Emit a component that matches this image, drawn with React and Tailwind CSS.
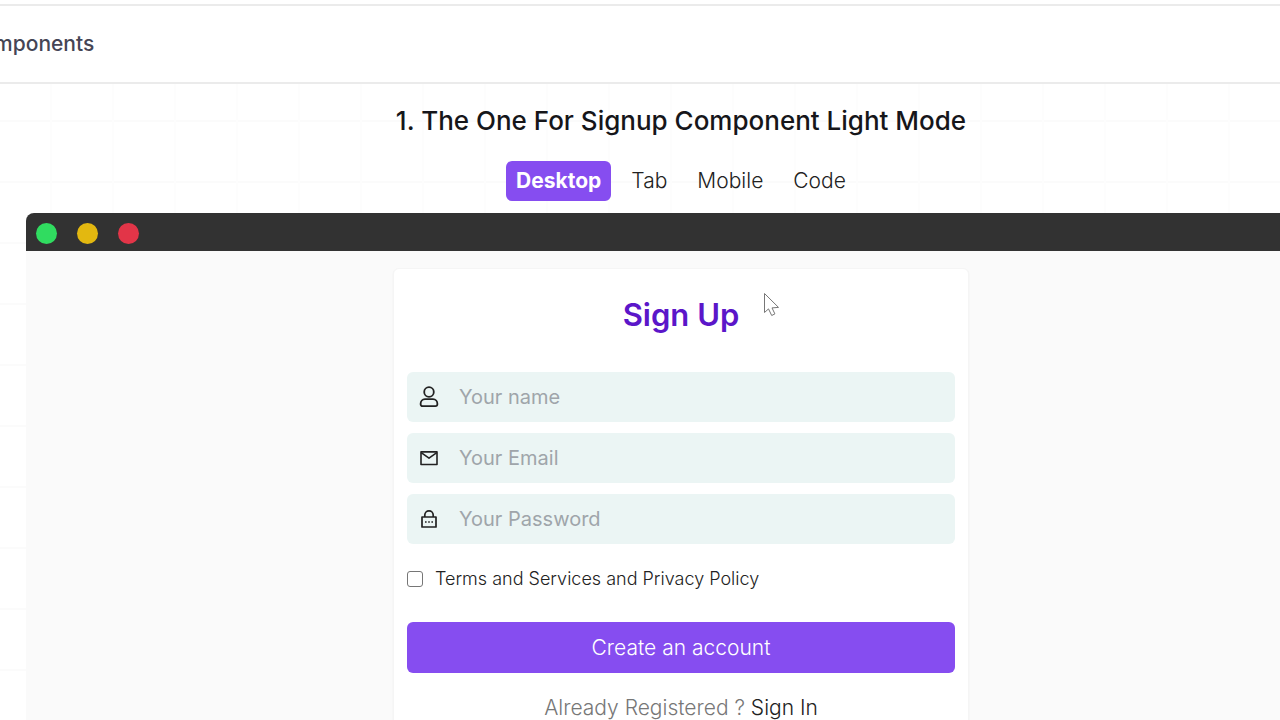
import { useState } from 'react'

const VIEWS = ['Desktop', 'Tab', 'Mobile', 'Code']

const UserIcon = () => (
  <svg viewBox="0 0 20 22" className="h-[22px] w-5" fill="none" stroke="currentColor" strokeWidth="1.8">
    <circle cx="10" cy="6" r="4.8" />
    <path d="M6 13.2h8c2.6 0 4.4 2.2 4.4 4.9 0 1.2-.8 2.1-2 2.1H3.6c-1.2 0-2-.9-2-2.1 0-2.7 1.8-4.9 4.4-4.9Z" />
  </svg>
)

const MailIcon = () => (
  <svg viewBox="0 0 20 20" className="h-5 w-5" fill="none" stroke="currentColor" strokeWidth="1.6" strokeLinejoin="round">
    <path d="M2 3.9h16v12.6H2z" />
    <path d="m2.2 4.6 7.8 5.6 7.8-5.6" />
  </svg>
)

const LockIcon = () => (
  <svg viewBox="0 0 20 20" className="h-5 w-5" fill="none" stroke="currentColor" strokeWidth="1.7" strokeLinejoin="round">
    <path d="M3 8h14v10H3z" />
    <path d="M5.8 8V6a4.2 4.2 0 0 1 8.4 0v2" />
    <path d="M6 13h1.6M9.2 13h1.6M12.4 13H14" />
  </svg>
)

const FIELDS = [
  { id: 'name', type: 'text', placeholder: 'Your name', icon: <UserIcon /> },
  { id: 'email', type: 'email', placeholder: 'Your Email', icon: <MailIcon /> },
  { id: 'password', type: 'password', placeholder: 'Your Password', icon: <LockIcon /> }
]

function SignupForm() {
  return (
    <form
      onSubmit={(e) => e.preventDefault()}
      className="w-[576px] rounded-md border border-[#f5f5f5] bg-white px-[13px] pt-6 pb-8 shadow-xs"
    >
      <h2 className="text-center text-[31px] leading-[44px] font-semibold text-[#5b16c9]">Sign Up</h2>

      <div className="mt-[35px] flex flex-col gap-[11px]">
        {FIELDS.map((field) => (
          <div key={field.id} className="flex h-[50px] items-center rounded-md bg-[#ebf5f4] pl-3 text-[#222]">
            <label htmlFor={field.id} aria-label={field.placeholder} className="flex w-10 shrink-0 items-center">
              {field.icon}
            </label>
            <input
              id={field.id}
              type={field.type}
              placeholder={field.placeholder}
              className="h-full min-w-0 flex-1 bg-transparent text-xl outline-none placeholder:text-[#9fa5aa]"
            />
          </div>
        ))}
      </div>

      <div className="mt-[21px] flex h-7 items-center gap-3">
        <input
          id="terms"
          type="checkbox"
          className="h-4 w-4 appearance-none rounded-[3px] border border-[#767676] bg-white checked:bg-[#864df0]"
        />
        <label htmlFor="terms" className="text-lg font-light text-[#222]">
          Terms and Services and Privacy Policy
        </label>
      </div>

      <button type="submit" className="mt-[29px] h-[51px] w-full rounded-md bg-[#864df0] text-[21px] font-light text-white">
        Create an account
      </button>

      <p className="mt-[21px] text-center text-[21px] leading-7 font-light text-[#777]">
        Already Registered ?{' '}
        <a href="#signin" className="text-[#222]">Sign In</a>
      </p>
    </form>
  )
}

export default function App() {
  const [view, setView] = useState('Desktop')

  return (
    <div className="flex h-screen flex-col overflow-hidden bg-white pt-1 font-['Inter',sans-serif]">
      <header className="flex h-20 shrink-0 items-center border-y-2 border-[#ebebeb]">
        <a href="#components" className="-ml-[34px] text-[21px] font-medium text-[#454555]">Components</a>
      </header>

      <main className="flex-1 bg-[linear-gradient(to_right,#fdfdfd_2px,transparent_2px),linear-gradient(to_bottom,#fbfbfb_2px,transparent_2px)] bg-[size:62px_61px] bg-[position:50px_36px]">
        <section className="-mr-14 ml-[26px] flex flex-col">
          <h1 className="mt-[19px] text-center text-[26px] leading-9 font-medium text-[#16161a]">
            1. The One For Signup Component Light Mode
          </h1>

          <nav className="mt-[22px] flex justify-center gap-[10px]">
            {VIEWS.map((name) => (
              <button
                key={name}
                type="button"
                onClick={() => setView(name)}
                className={
                  view === name
                    ? 'h-10 rounded-md bg-[#864df0] px-[10px] text-[21px] font-bold text-white'
                    : 'h-10 rounded-md px-[10px] text-[21px] font-light text-[#222]'
                }
              >
                {name}
              </button>
            ))}
          </nav>

          <div className="mt-3 overflow-hidden rounded-t-lg">
            <div className="flex h-[38px] items-center gap-5 bg-[#323232] px-[10px] pt-[2px]">
              <span className="h-[21px] w-[21px] rounded-full bg-[#30dc60]" />
              <span className="h-[21px] w-[21px] rounded-full bg-[#e3b810]" />
              <span className="h-[21px] w-[21px] rounded-full bg-[#e23548]" />
            </div>
            <div className="flex justify-center bg-[#fafafa] pt-[17px] pb-8">
              <SignupForm />
            </div>
          </div>
        </section>
      </main>

      {/* Mouse pointer */}
      <svg
        viewBox="0 0 18 26"
        className="pointer-events-none absolute top-[292px] left-[763px] h-[26px] w-[18px]"
        fill="#fff"
        stroke="#777"
        strokeWidth="1"
      >
        <path d="M1.5 1.5v19l4-3.6 3.2 6.6 3.2-1.6-2.9-6 6.5-.5Z" />
      </svg>
    </div>
  )
}
